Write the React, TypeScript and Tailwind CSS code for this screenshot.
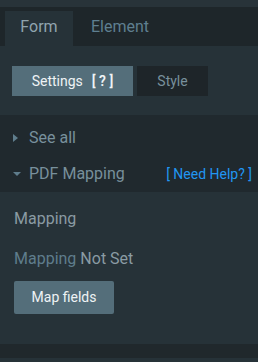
export default function App() {
  return (
    <div className="w-[258px] h-[362px] bg-[#283339] font-['Roboto',sans-serif] flex flex-col overflow-hidden">
      <div className="h-[7px] bg-[#283339]" />
      <nav className="h-[39px] bg-[#1e262a] flex items-end pl-[5px]">
        <div className="w-[68px] h-[35px] pb-[4px] bg-[#263238] flex items-center justify-center text-[16px] text-[#90a4ae]">
          Form
        </div>
        <div className="ml-[18px] h-[35px] pb-[4px] flex items-center text-[16px] text-[#5f7f90]">Element</div>
      </nav>

      <section className="h-[69px] bg-[#263238] pt-[20px] pl-[12px] flex gap-[4px]">
        <button className="w-[121px] h-[30px] bg-[#546e7a] text-[14px] text-[#eef3f5] flex items-center justify-center">
          Settings
          <span className="ml-[9px] font-semibold">[ ? ]</span>
        </button>
        <button className="w-[71px] h-[30px] bg-[#1e2529] text-[14px] text-[#78909c]">Style</button>
      </section>

      <section className="h-[77px] bg-[#20292e] pt-[5px]">
        <div className="h-9 flex items-center pl-[13px] text-[16px] text-[#78909c]">
          <span className="w-0 h-0 border-y-[4px] border-y-transparent border-l-[5px] border-l-[#5f7d8c]" />
          <span className="ml-[11px]">See all</span>
        </div>
        <div className="h-9 flex items-center pl-[13px] pr-[6px] text-[16px] text-[#78909c]">
          <span className="w-0 h-0 border-x-[4px] border-x-transparent border-t-[4px] border-t-[#5f7d8c]" />
          <span className="ml-[8px]">PDF Mapping</span>
          <span className="ml-auto text-[14px] text-[#2196f3]">[ Need Help? ]</span>
        </div>
      </section>

      <section className="h-[152px] bg-[#263238] px-[14px] pt-[16px]">
        <div className="h-[22px] flex items-center text-[16px] text-[#8a9ba3]">Mapping</div>
        <div className="mt-[18px] h-[22px] flex items-center text-[16px]">
          <span className="text-[#5f7d8c]">Mapping</span>
          <span className="ml-[4px] text-[#8a9ba3]">Not Set</span>
        </div>
        <button className="mt-[11px] w-[100px] h-[33px] rounded-[2px] bg-[#546e7a] text-[14px] text-[#eef3f5]">
          Map fields
        </button>
      </section>

      <div className="h-[14px] bg-[#20282c]" />
      <div className="flex-1 bg-[#263238]" />
    </div>
  )
}
